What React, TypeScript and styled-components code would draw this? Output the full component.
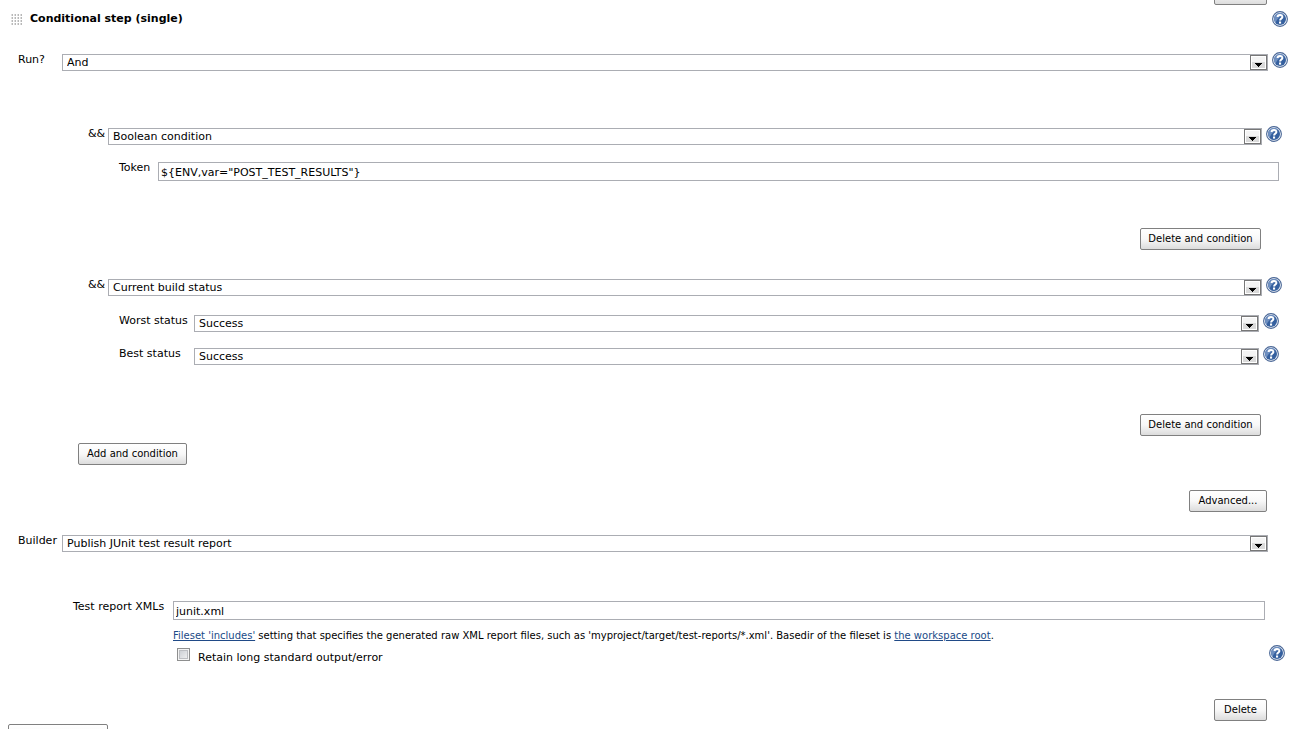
import React, { useId } from "react";
import styled, { createGlobalStyle } from "styled-components";

const GlobalStyle = createGlobalStyle`
  * { box-sizing: border-box; }
  body {
    margin: 0;
    background: #fff;
    color: #000;
    font: 11px/14px Verdana, "DejaVu Sans", sans-serif;
  }
`;

const Page = styled.main`
  height: 100vh;
  overflow: hidden;
  display: flex;
  flex-direction: column;
`;

const Header = styled.header`
  display: flex;
  align-items: center;
  margin-top: 6px;
  padding: 0 12px 0 11px;
`;

const Title = styled.h1`
  flex: 1;
  margin: 0 0 0 8px;
  font-size: 11px;
  line-height: 14px;
`;

const Row = styled.div<{ $top: number; $left: number; $right: number }>`
  display: flex;
  align-items: flex-start;
  margin-top: ${(p) => p.$top}px;
  padding-left: ${(p) => p.$left}px;
  padding-right: ${(p) => p.$right}px;
`;

const Label = styled.label<{ $width: number }>`
  flex: none;
  width: ${(p) => p.$width}px;
  line-height: 16px;
  white-space: nowrap;
`;

const SelectBox = styled.div`
  position: relative;
  flex: 1;
  height: 17px;
  margin-top: 2px;
`;

const SelectControl = styled.select`
  display: block;
  width: 100%;
  height: 17px;
  padding: 1px 20px 0 4px;
  border: 1px solid #abadb3;
  border-radius: 0;
  background: #fff;
  color: #000;
  font: inherit;
  line-height: 14px;
  appearance: none;
`;

const ArrowBox = styled.svg`
  position: absolute;
  top: 1px;
  right: 1px;
  pointer-events: none;
`;

const TextInput = styled.input`
  flex: 1;
  min-width: 0;
  height: 19px;
  margin-top: 2px;
  padding: 2px 2px 0;
  border: 1px solid #abadb3;
  background: #fff;
  color: #000;
  font: inherit;
`;

const Button = styled.button<{ $width: number }>`
  width: ${(p) => p.$width}px;
  height: 22px;
  padding: 0;
  border: 1px solid #808080;
  border-radius: 2px;
  background: linear-gradient(#fff, #f8f8f8 50%, #dcdcdc);
  color: #000;
  font: 10px/14px Verdana, "DejaVu Sans", sans-serif;
  white-space: nowrap;
`;

const ButtonRow = styled(Row)`
  justify-content: flex-end;
`;

const ClippedRow = styled(ButtonRow)`
  margin-top: -17px;
`;

const HelpButton = styled.button`
  flex: none;
  width: 16px;
  height: 16px;
  margin-left: 4px;
  padding: 0;
  border: 0;
  background: none;
  svg { display: block; }
`;

const Description = styled.p`
  margin: 9px 0 0;
  padding: 0 12px 0 173px;
  font-size: 10px;
  line-height: 14px;
  a { color: #204a87; }
`;

const CheckLabel = styled.label`
  flex: 1;
  margin-left: 8px;
  line-height: 14px;
  padding-top: 6px;
`;

const Checkbox = styled.input`
  width: 13px;
  height: 13px;
  margin: 3px 0 0;
  border: 1px solid #8e8f8f;
  background: linear-gradient(135deg, #c4c8ce, #f6f6f6);
  box-shadow: inset 0 0 0 1px #f4f4f4, inset 0 0 0 2px #bcbec2;
  appearance: none;
`;

function DragHandle() {
  const steps = [0, 1, 2, 3];
  return (
    <svg width="11" height="11" viewBox="0 0 11 11" aria-hidden="true">
      {steps.map((y) =>
        steps.map((x) => (
          <g key={`${x}-${y}`}>
            <rect x={x * 3} y={y * 3} width="2" height="2" fill="#dedede" />
            <rect x={x * 3 + 1} y={y * 3} width="1" height="2" fill="#b8b8b8" />
          </g>
        ))
      )}
    </svg>
  );
}

function Help() {
  return (
    <HelpButton type="button" aria-label="Help">
      <svg width="16" height="16" viewBox="0 0 16 16">
        <circle cx="8" cy="8" r="7.4" fill="#f4f7fb" stroke="#4a6796" strokeWidth="1.1" />
        <circle cx="8" cy="8" r="6" fill="#35609f" />
        <path d="M2 8a6 6 0 0 1 10.5-4C9 4.500 5 7 3.600 12A6 6 0 0 1 2 8z" fill="#6e8fc0" />
        <path
          d="M5.600 6C5.600 3.400 10.400 3.400 10.400 5.900C10.400 7.500 8.100 7.600 8.100 9.500"
          fill="none"
          stroke="#fff"
          strokeWidth="2"
        />
        <rect x="7" y="10.500" width="2.100" height="2.100" fill="#fff" />
      </svg>
    </HelpButton>
  );
}

interface FieldProps {
  label: string;
  value: string;
  labelWidth: number;
  top: number;
  left: number;
  right: number;
  help?: boolean;
}

function SelectField({ label, value, labelWidth, top, left, right, help = true }: FieldProps) {
  const id = useId();
  return (
    <Row $top={top} $left={left} $right={right}>
      <Label htmlFor={id} $width={labelWidth}>{label}</Label>
      <SelectBox>
        <SelectControl id={id} defaultValue={value}>
          <option>{value}</option>
        </SelectControl>
        <ArrowBox width="17" height="15" viewBox="0 0 17 15" aria-hidden="true">
          <rect x="0.5" y="0.5" width="16" height="14" fill="#fff" stroke="#777" />
          <rect x="2" y="2" width="13" height="5" fill="#f4f4f4" />
          <rect x="2" y="7" width="13" height="6" fill="#dadada" />
          <path d="M5 8h7v1h-1v1h-1v1H9v1H8v-1H7v-1H6V9H5z" fill="#000" />
        </ArrowBox>
      </SelectBox>
      {help && <Help />}
    </Row>
  );
}

function TextField({ label, value, labelWidth, top, left, right }: FieldProps) {
  const id = useId();
  return (
    <Row $top={top} $left={left} $right={right}>
      <Label htmlFor={id} $width={labelWidth}>{label}</Label>
      <TextInput id={id} type="text" defaultValue={value} />
    </Row>
  );
}

export default function App() {
  return (
    <>
      <GlobalStyle />
      <Page>
        <ClippedRow $top={0} $left={12} $right={33}>
          <Button type="button" $width={53} aria-label="Delete" />
        </ClippedRow>

        <Header>
          <DragHandle />
          <Title>Conditional step (single)</Title>
          <Help />
        </Header>

        <SelectField label="Run?" value="And" labelWidth={44} top={25} left={18} right={12} />

        <SelectField label="&&" value="Boolean condition" labelWidth={20} top={55} left={88} right={18} />
        <TextField label="Token" value={'${ENV,var="POST_TEST_RESULTS"}'} labelWidth={39} top={15} left={119} right={21} />
        <ButtonRow $top={47} $left={12} $right={39}>
          <Button type="button" $width={121}>Delete and condition</Button>
        </ButtonRow>

        <SelectField label="&&" value="Current build status" labelWidth={20} top={27} left={88} right={18} />
        <SelectField label="Worst status" value="Success" labelWidth={75} top={17} left={119} right={21} />
        <SelectField label="Best status" value="Success" labelWidth={75} top={14} left={119} right={21} />
        <ButtonRow $top={49} $left={12} $right={39}>
          <Button type="button" $width={121}>Delete and condition</Button>
        </ButtonRow>

        <Row $top={7} $left={78} $right={12}>
          <Button type="button" $width={109}>Add and condition</Button>
        </Row>
        <ButtonRow $top={25} $left={12} $right={33}>
          <Button type="button" $width={78}>Advanced...</Button>
        </ButtonRow>

        <SelectField label="Builder" value="Publish JUnit test result report" labelWidth={44} top={21} left={18} right={32} help={false} />

        <TextField label="Test report XMLs" value="junit.xml" labelWidth={100} top={47} left={73} right={35} />
        <Description>
          <a href="#includes">Fileset 'includes'</a> setting that specifies the generated raw XML report files, such as
          'myproject/target/test-reports/*.xml'. Basedir of the fileset is <a href="#workspace">the workspace root</a>.
        </Description>
        <Row $top={2} $left={177} $right={15}>
          <Checkbox id="retain" type="checkbox" />
          <CheckLabel htmlFor="retain">Retain long standard output/error</CheckLabel>
          <Help />
        </Row>

        <ButtonRow $top={34} $left={12} $right={33}>
          <Button type="button" $width={53}>Delete</Button>
        </ButtonRow>
        <Row $top={3} $left={8} $right={12}>
          <Button type="button" $width={100} aria-label="Add build step" />
        </Row>
      </Page>
    </>
  );
}
